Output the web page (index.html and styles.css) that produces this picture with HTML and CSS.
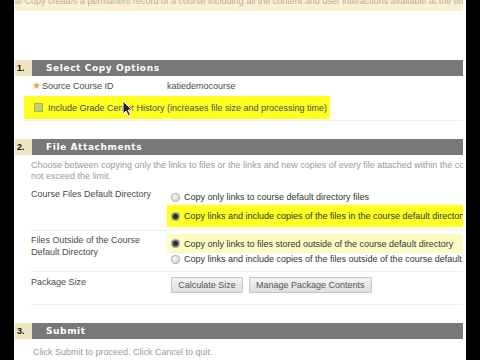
FILE: index.html
```html
<!DOCTYPE html>
<html lang="en">
<head>
    <meta charset="UTF-8">
    <title>Copy Course</title>
    <link rel="stylesheet" href="styles.css">
</head>
<body>
    <div class="page">
        <div class="notice"><span>Course Copy creates a permanent record of a course including all the content and user interactions available at the time of the copy.</span></div>

        <section class="step">
            <div class="step-head">
                <span class="step-num">1.</span>
                <h2 class="step-title">Select Copy Options</h2>
            </div>
            <div class="row row-source">
                <div class="field-label"><span class="req">&#9733;</span>Source Course ID</div>
                <div class="field-value">katiedemocourse</div>
            </div>
            <div class="row row-check">
                <label class="check hl">
                    <span class="box"></span>
                    Include Grade Center History (increases file size and processing time)
                </label>
                <svg class="cursor" width="11" height="17" viewBox="0 0 11 17">
                    <path d="M1 1 L1 14 L4 11 L6.5 16 L8.5 15 L6 10 L10 10 Z" fill="#222" stroke="#fff" stroke-width="1"/>
                </svg>
            </div>
        </section>

        <section class="step">
            <div class="step-head">
                <span class="step-num">2.</span>
                <h2 class="step-title">File Attachments</h2>
            </div>
            <div class="desc">
                <span>Choose between copying only the links to files or the links and new copies of every file attached within the course. The package size must</span>
                <span>not exceed the limit.</span>
            </div>
            <div class="row row-files">
                <div class="field-label">Course Files Default Directory</div>
                <div class="options">
                    <div class="option"><span class="radio"></span>Copy only links to course default directory files</div>
                    <div class="option hl tall"><span class="radio on"></span>Copy links and include copies of the files in the course default directory</div>
                </div>
            </div>
            <div class="row row-outside">
                <div class="field-label">Files Outside of the Course<br>Default Directory</div>
                <div class="options">
                    <div class="option pale"><span class="radio on"></span>Copy only links to files stored outside of the course default directory</div>
                    <div class="option short"><span class="radio"></span>Copy links and include copies of the files outside of the course default directory</div>
                </div>
            </div>
            <div class="row row-size">
                <div class="field-label">Package Size</div>
                <div class="buttons">
                    <button class="btn calc">Calculate Size</button>
                    <button class="btn">Manage Package Contents</button>
                </div>
            </div>
        </section>

        <section class="step">
            <div class="step-head">
                <span class="step-num">3.</span>
                <h2 class="step-title">Submit</h2>
            </div>
            <p class="submit-note">Click Submit to proceed. Click Cancel to quit.</p>
        </section>
    </div>
</body>
</html>
```

FILE: styles.css
```css
body {
    margin: 0;
    background: #000;
    font-family: "Liberation Sans", Arial, sans-serif;
    font-size: 9px;
    color: #4a4a4a;
}

.page {
    width: 448px;
    height: 360px;
    margin-left: 14px;
    padding: 0 3px 0 1px;
    background: #fff;
    overflow: hidden;
}

/* only the lower half of this line is still on screen */
.notice {
    height: 11px;
    margin-bottom: 49px;
    padding-left: 2px;
    background: #fcf0d2;
    color: #b8ae94;
    white-space: nowrap;
    overflow: hidden;
}

.notice span {
    display: block;
    margin-top: -4px;
    margin-left: -24px;
    line-height: 11px;
}

.step {
    margin-bottom: 18px;
}

.step-head {
    display: flex;
    height: 16px;
}

.step-num {
    width: 15px;
    padding-left: 2px;
    background: #f0e5c1;
    color: #111;
    font-weight: bold;
    line-height: 16px;
}

.step-title {
    flex: 1;
    margin: 0;
    padding-left: 14px;
    background: #787878;
    color: #fff;
    font-family: "DejaVu Sans", Verdana, sans-serif;
    font-size: 9px;
    font-weight: bold;
    letter-spacing: 0.6px;
    line-height: 16px;
}

.row {
    display: flex;
    margin-left: 16px;
    border-bottom: 1px solid #efefef;
    white-space: nowrap;
    overflow: hidden;
}

.field-label {
    width: 136px;
    flex: none;
    line-height: 11px;
}

.row-source {
    height: 20px;
    margin-left: 17px;
    border-bottom: none;
    align-items: center;
}

.row-source .field-label {
    width: 135px;
}

.req {
    color: #f0a23a;
    font-size: 10px;
    margin-right: 1px;
}

.row-check {
    position: relative;
    margin-left: 9px;
    height: 24px;
}

.check {
    display: flex;
    align-items: center;
    gap: 5px;
    height: 23px;
    padding: 0 3px 0 10px;
}

.box {
    width: 7px;
    height: 7px;
    border: 1px solid #a7b25e;
    background: #c3d06a;
}

.hl {
    background: #ffff20;
}

.pale {
    background: #fdfbc4;
}

.cursor {
    position: absolute;
    left: 98px;
    top: 4px;
}

.desc {
    padding: 5px 0 0 16px;
    color: #9a9a9a;
    line-height: 11px;
}

.desc span {
    display: block;
    white-space: nowrap;
    overflow: hidden;
}

.options {
    flex: 1;
    overflow: hidden;
}

.option {
    display: flex;
    align-items: center;
    gap: 4px;
    height: 16px;
    padding-left: 4px;
    color: #333;
}

.option.tall {
    height: 22px;
}

.option.pale {
    height: 19px;
}

.option.short {
    height: 12px;
}

.radio {
    width: 9px;
    height: 9px;
    flex: none;
    border-radius: 50%;
    background: radial-gradient(circle at 40% 35%, #f4f4f4, #c8c8c8);
    box-shadow: inset 0 0 0 1px #b8b8b8;
}

.radio.on {
    background: radial-gradient(circle, #2e2e2e 0 2px, #77775a 3px, #bdbd98 100%);
}

.row-files {
    padding: 7px 0 3px;
}

.row-outside {
    padding: 3px 0 6px;
}

.row-outside .field-label {
    line-height: 12px;
}

.row-size {
    padding: 5px 0 11px;
}

.buttons {
    display: flex;
    gap: 6px;
    padding-left: 4px;
}

.btn {
    height: 16px;
    padding: 0 6px;
    border: 1px solid #c6c6c6;
    border-radius: 1px;
    background: linear-gradient(#f4f4f4, #dedede);
    color: #555;
    font-family: "Liberation Sans", Arial, sans-serif;
    font-size: 9px;
}

.calc {
    width: 72px;
}

.submit-note {
    margin: 0;
    padding: 8px 0 0 18px;
    color: #9a9a9a;
    line-height: 10px;
}
```
